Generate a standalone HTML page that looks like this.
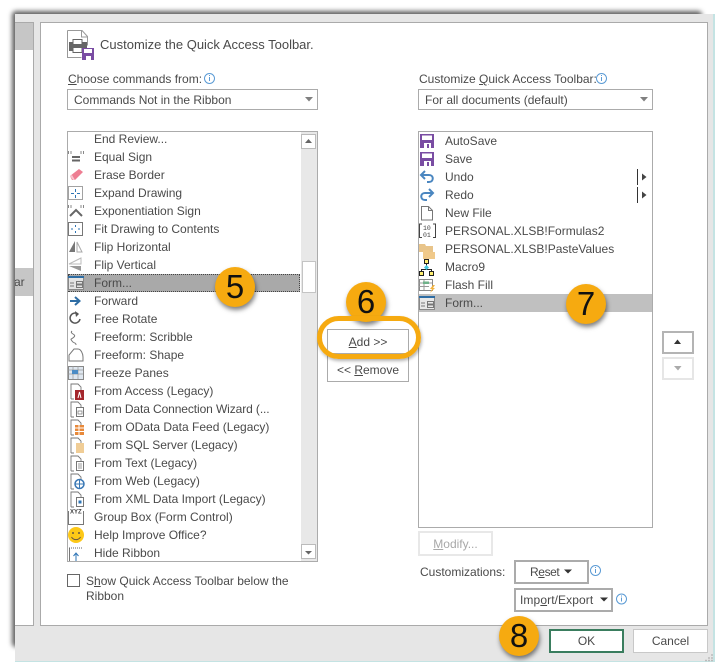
<!DOCTYPE html>
<html><head><meta charset="utf-8">
<style>
html,body{margin:0;padding:0;background:#fff}
#p{position:relative;width:715px;height:662px;overflow:hidden;background:#fff;font:12px "Liberation Sans",sans-serif;color:#4a4a4a}
#p div{position:absolute;box-sizing:border-box}
.t{white-space:nowrap;line-height:16px;height:16px}
.b{background:#fff;border:1px solid #ababab;text-align:center;color:#4a4a4a;white-space:nowrap}
.c{width:40px;height:40px;border-radius:50%;background:#f6aa10;color:#111;font-size:33px;line-height:40px;text-align:center;box-shadow:1px 3px 5px rgba(0,0,0,.5)}
u{text-underline-offset:1px}
</style></head><body><div id="p">
<div style="left:15px;top:14px;width:688px;height:634px;box-shadow:-2px -2px 5px 1px rgba(0,0,0,.62);background:#777;border-radius:3px"></div>
<div style="left:15px;top:14px;width:698px;height:647px;background:#e6e6e6"></div>
<div style="left:713px;top:14px;width:2px;height:648px;background:#c4e3e3"></div>
<div style="left:15px;top:661px;width:700px;height:1px;background:#c4e3e3"></div>
<div style="left:15px;top:22px;width:19px;height:604px;background:#fff;border-top:1px solid #aaa;border-right:1px solid #aaa;border-bottom:1px solid #aaa"></div>
<div style="left:15px;top:23px;width:18px;height:27px;background:#c6c6c6"></div>
<div style="left:15px;top:268px;width:18px;height:28px;background:#c6c6c6;text-align:left;text-indent:-1px;line-height:28px;overflow:hidden">ar</div>
<div style="left:40px;top:22px;width:668px;height:604px;background:#fff;border:1px solid #aaa"></div>

<div class="t" style="left:100px;top:37px;font-size:13px">Customize the Quick Access Toolbar.</div>
<div class="t" style="left:68px;top:71px"><u>C</u>hoose commands from:</div>
<div style="left:67px;top:89px;width:251px;height:21px;border:1px solid #ababab;background:#fff"></div>
<div class="t" style="left:74px;top:92px">Commands Not in the Ribbon</div>
<div class="t" style="left:419px;top:71px">Customize <u>Q</u>uick Access Toolbar:</div>
<div style="left:418px;top:89px;width:235px;height:21px;border:1px solid #ababab;background:#fff"></div>
<div class="t" style="left:425px;top:92px">For all documents (default)</div>

<div style="left:67px;top:131px;width:251px;height:431px;border:1px solid #ababab;background:#fff"></div>
<div style="left:301px;top:132px;width:16px;height:429px;background:#e8e8e8"></div>
<div style="left:301px;top:134px;width:15px;height:15px;background:#fff;border:1px solid #bbb"></div>
<div style="left:301px;top:544px;width:15px;height:15px;background:#fff;border:1px solid #bbb"></div>
<div style="left:302px;top:261px;width:14px;height:32px;background:#fff;border:1px solid #c4c4c4"></div>
<div style="left:68px;top:274px;width:232px;height:18px;background:#a9a9a9;border:1px dotted #444"></div>

<div class="t" style="left:94px;top:131px">End Review...</div>
<div class="t" style="left:94px;top:149px">Equal Sign</div>
<div class="t" style="left:94px;top:167px">Erase Border</div>
<div class="t" style="left:94px;top:185px">Expand Drawing</div>
<div class="t" style="left:94px;top:203px">Exponentiation Sign</div>
<div class="t" style="left:94px;top:221px">Fit Drawing to Contents</div>
<div class="t" style="left:94px;top:239px">Flip Horizontal</div>
<div class="t" style="left:94px;top:257px">Flip Vertical</div>
<div class="t" style="left:94px;top:275px">Form...</div>
<div class="t" style="left:94px;top:293px">Forward</div>
<div class="t" style="left:94px;top:311px">Free Rotate</div>
<div class="t" style="left:94px;top:329px">Freeform: Scribble</div>
<div class="t" style="left:94px;top:347px">Freeform: Shape</div>
<div class="t" style="left:94px;top:365px">Freeze Panes</div>
<div class="t" style="left:94px;top:383px">From Access (Legacy)</div>
<div class="t" style="left:94px;top:401px;letter-spacing:-.1px">From Data Connection Wizard (...</div>
<div class="t" style="left:94px;top:419px">From OData Data Feed (Legacy)</div>
<div class="t" style="left:94px;top:437px">From SQL Server (Legacy)</div>
<div class="t" style="left:94px;top:455px">From Text (Legacy)</div>
<div class="t" style="left:94px;top:473px">From Web (Legacy)</div>
<div class="t" style="left:94px;top:491px">From XML Data Import (Legacy)</div>
<div class="t" style="left:94px;top:509px">Group Box (Form Control)</div>
<div class="t" style="left:94px;top:527px">Help Improve Office?</div>
<div class="t" style="left:94px;top:545px">Hide Ribbon</div>

<div style="left:418px;top:131px;width:235px;height:397px;border:1px solid #ababab;background:#fff"></div>
<div style="left:419px;top:294px;width:233px;height:18px;background:#c0c0c0"></div>
<div class="t" style="left:445px;top:133px">AutoSave</div>
<div class="t" style="left:445px;top:151px">Save</div>
<div class="t" style="left:445px;top:169px">Undo</div>
<div class="t" style="left:445px;top:187px">Redo</div>
<div class="t" style="left:445px;top:205px">New File</div>
<div class="t" style="left:445px;top:223px">PERSONAL.XLSB!Formulas2</div>
<div class="t" style="left:445px;top:241px">PERSONAL.XLSB!PasteValues</div>
<div class="t" style="left:445px;top:259px">Macro9</div>
<div class="t" style="left:445px;top:277px">Flash Fill</div>
<div class="t" style="left:445px;top:295px">Form...</div>

<div class="b" style="left:327px;top:353px;width:82px;height:29px;line-height:33px">&lt;&lt; <u>R</u>emove</div>
<div class="b" style="left:327px;top:329px;width:82px;height:25px;line-height:24px"><u>A</u>dd &gt;&gt;</div>

<div class="b" style="left:662px;top:331px;width:32px;height:23px;border:2px solid #b4b4b4"></div>
<div class="b" style="left:662px;top:357px;width:32px;height:23px;border:2px solid #e6e6e6"></div>

<div class="b" style="left:418px;top:531px;width:75px;height:25px;line-height:22px;border:2px solid #e8e8e8;color:#a8a8a8"><u>M</u>odify...</div>
<div class="t" style="left:420px;top:564px">Customizations:</div>
<div class="b" style="left:514px;top:560px;width:75px;height:24px;border:2px solid #ababab;line-height:21px;text-align:left;padding-left:14px;letter-spacing:-.4px">R<u>e</u>set</div>
<div class="b" style="left:514px;top:588px;width:99px;height:24px;border:2px solid #ababab;line-height:21px;text-align:left;padding-left:4px;letter-spacing:.1px">Imp<u>o</u>rt/Export</div>
<div class="b" style="left:549px;top:629px;width:75px;height:24px;border:2px solid #3a7d5e;line-height:21px">OK</div>
<div class="b" style="left:633px;top:629px;width:75px;height:24px;line-height:22px;border-color:#c8c8c8">Cancel</div>

<div style="left:67px;top:574px;width:13px;height:13px;border:1px solid #666;background:#fff"></div>
<div class="t" style="left:86px;top:573px">S<u>h</u>ow Quick Access Toolbar below the</div>
<div class="t" style="left:86px;top:588px">Ribbon</div>

<svg width="715" height="662" style="position:absolute;left:0;top:0" fill="none">
<!-- title icon -->
<path d="M67.500 30.500h14.500l5.500 6v9M67.500 30.500v27h14" stroke="#999"/><path d="M81.500 31v6h6" stroke="#999"/>
<path d="M69 42h18v9h-18z" fill="#666"/><path d="M73 39.500h9v5h-9zM73 47.500h9v5h-9z" fill="#fff" stroke="#666"/>
<rect x="82" y="48" width="12" height="12" fill="#7a4da3"/><rect x="84" y="49" width="8" height="4" fill="#fff"/><rect x="86" y="56" width="5" height="4" fill="#fff"/>
<!-- info -->
<g stroke="#5b9bd5" fill="none"><circle cx="209.500" cy="78.500" r="5"/><circle cx="601.500" cy="78.500" r="5"/><circle cx="595.500" cy="570.500" r="5"/><circle cx="621.500" cy="599" r="5"/>
<path d="M209.500 77v4M209.500 75v1M601.500 77v4M601.500 75v1M595.500 569v4M595.500 567v1M621.500 597.500v4M621.500 595.500v1"/></g>
<!-- dropdown arrows -->
<path d="M305 97h8l-4 4.500zM640 97h8l-4 4.500z" fill="#808080"/>
<path d="M305 143l3.500-4 3.500 4zM305 551h7l-3.500 3.500z" fill="#666"/>
<path d="M674 344l3.500-4.500 3.500 4.500z" fill="#333"/><path d="M674 366h7.500l-3.500 4.500z" fill="#aaa"/>
<path d="M564 569.500h8l-4 4zM600 597.500h8l-4 4z" fill="#333"/>
<!-- right arrows -->
<path d="M637.500 169v16M637.500 187v16" stroke="#333"/><path d="M642 173.500l4.500 3.500-4.500 3.500zM642 191.500l4.500 3.500-4.500 3.500z" fill="#444"/>
<!-- left icons -->
<g>
<path d="M68.500 151v3M71 151v3M81 151v3M83.500 151v3" stroke="#888"/><path d="M72 157h8M72 160.500h8" stroke="#666" stroke-width="2"/>
<path d="M70 176l9-7 4 3-8 8h-3z" fill="#ee7d92"/><path d="M70 176l3 4h2l-3-5z" fill="#f8c5cf"/>
<rect x="68.500" y="186.500" width="14" height="13" stroke="#444" stroke-dasharray="1 1"/><path d="M75.500 189v3M75.500 195v3M71 193.500h3M77 193.500h3" stroke="#2e75b6"/>
<path d="M68.500 205v3M71 205v3M81 205v3M83.500 205v3" stroke="#888"/><path d="M70 216l6-6 6 6" stroke="#666" stroke-width="2"/>
<rect x="68.500" y="222.500" width="14" height="13" stroke="#777"/><path d="M75.500 225v2M75.500 231v2M71 229h2M78 229h2" stroke="#2e75b6"/>
<path d="M75 241l-6 11h6z" fill="#777"/><path d="M77 242v10h5z" stroke="#aaa"/>
<path d="M81 258l-12 6h12z" stroke="#bbb" fill="#fff"/><path d="M69 266h12v5z" fill="#999"/>
<rect x="68.500" y="276.500" width="15" height="13" fill="#e4e4e4" stroke="#888"/><rect x="68" y="276" width="16" height="2" fill="#2e6da4"/><path d="M70 283h4M70 286h4" stroke="#777"/><rect x="76.500" y="281.500" width="6" height="2.500" stroke="#777"/><rect x="76.500" y="285" width="6" height="2.500" stroke="#777"/>
<path d="M70 301h9" stroke="#2e6da4" stroke-width="2"/><path d="M75 297l4.500 4-4.500 4" stroke="#2e6da4" stroke-width="2"/>
<path d="M78 314a5 5 0 1 0 2 5" stroke="#555" stroke-width="1.500"/><path d="M75 311l4 3-3 3z" fill="#555"/>
<path d="M72 331c-3 3 5 3 2 6s-4 1-2 4 4 1 4 4" stroke="#777"/>
<path d="M69 361v-6l5-6h4c3 0 5 5 5 8v4z" stroke="#777"/>
<rect x="68.500" y="366.500" width="15" height="13" fill="#dfe7f0" stroke="#888"/><path d="M68 370h15M73 366v13M78 366v13M68 374h15" stroke="#999" stroke-width=".7"/><rect x="72" y="370" width="6" height="4" fill="#4a8bc5"/>
<g stroke="#777" stroke-width=".9"><path d="M71 399v-15h7l3 3v3M71 399h3M71 417v-15h7l3 3v3M71 417h3M71 435v-15h7l3 3v2M71 435h3M71 453v-15h7l3 3v2M71 453h3M71 471v-15h7l3 3v3M71 471h3M71 489v-15h7l3 3v3M71 489h3M71 507v-15h7l3 3v3M71 507h3"/></g>
<rect x="75" y="390" width="9" height="10" fill="#a4262c"/><path d="M78 398l1.500-6 1.500 6" stroke="#fff"/>
<rect x="76.500" y="407.500" width="7" height="9" fill="#fff" stroke="#777"/><path d="M78 411h4v3h-4z" stroke="#777" stroke-width=".7"/>
<rect x="75" y="425" width="9" height="10" fill="#e8893a"/><path d="M75 428h9M75 431.500h9M79 425v10" stroke="#fff"/>
<rect x="76" y="443" width="8" height="10" fill="#f0cd96"/>
<rect x="76.500" y="461.500" width="7" height="9" fill="#fff" stroke="#777"/><path d="M78 464h4M78 466h4M78 468h4" stroke="#777" stroke-width=".8"/>
<circle cx="79.500" cy="484" r="4.500" fill="#fff" stroke="#3a78b5" stroke-width="1.500"/><path d="M75 484h9M79.500 480v8" stroke="#3a78b5"/>
<rect x="76.500" y="497.500" width="7" height="9" fill="#fff" stroke="#777"/><rect x="78.500" y="500.500" width="3" height="3" fill="#2e75b6"/>
<path d="M68.500 511v13.500h15V511" stroke="#777"/>
<text x="70" y="513.500" font-size="6" font-weight="bold" font-family="Liberation Sans,sans-serif" fill="#444">XYZ</text>
<circle cx="76" cy="535" r="8" fill="#fdc817"/><circle cx="73" cy="533" r="1" fill="#654"/><circle cx="79" cy="533" r="1" fill="#654"/><path d="M71.500 537c2 3.500 7 3.500 9 0" stroke="#654"/>
<path d="M69.500 561v-13" stroke="#777"/><path d="M69 548h14" stroke="#666" stroke-dasharray="1 1"/><path d="M76 561v-7M73.500 556l2.500-3 2.500 3" stroke="#2e75b6"/>
</g>
<!-- right icons -->
<g>
<rect x="420" y="134" width="14" height="14" fill="#7a4da3"/><rect x="422" y="135.500" width="10" height="4.500" fill="#fff"/><rect x="424" y="143" width="7" height="5" fill="#fff"/><rect x="427" y="144" width="2" height="4" fill="#7a4da3"/>
<rect x="420" y="152" width="14" height="14" fill="#7a4da3"/><rect x="422" y="153.500" width="10" height="4.500" fill="#fff"/><rect x="424" y="161" width="7" height="5" fill="#fff"/><rect x="427" y="162" width="2" height="4" fill="#7a4da3"/>
<path d="M421 175h8c5 0 5 7 0 7h-2" stroke="#4a86c0" stroke-width="2"/><path d="M425 171l-4 4 4 4" stroke="#4a86c0" stroke-width="2"/>
<path d="M433 193h-8c-5 0-5 7 0 7h2" stroke="#4a86c0" stroke-width="2"/><path d="M429 189l4 4-4 4" stroke="#4a86c0" stroke-width="2"/>
<path d="M421.500 206.500h7l4 4v9.500h-11zM428.500 206.500v4h4" stroke="#777"/>
<path d="M422 224h-2.500v13.500h2.500M433 224h2.500v13.500h-2.500" stroke="#444"/>
<text x="423" y="230" font-size="6.500" font-family="Liberation Mono,monospace" fill="#444">10</text><text x="423" y="237" font-size="6.500" font-family="Liberation Mono,monospace" fill="#444">01</text>
<path d="M419 244h6l1 2h7v6h-14z" fill="#e8c48a"/><path d="M423 250h6l1 2h5v7h-12z" fill="#f0c98a"/>
<path d="M426.500 264v6M421.500 272v-2.500h10v2.500" stroke="#222"/><rect x="424.500" y="259.500" width="4" height="4" fill="#ffef70" stroke="#222"/><rect x="419.500" y="271.500" width="4" height="4" fill="#ffef70" stroke="#222"/><rect x="429.500" y="271.500" width="4" height="4" fill="#ffef70" stroke="#222"/><path d="M426.500 265l2.500 2.500-2.500 2.500-2.500-2.500z" fill="#43c6dd"/>
<rect x="419.500" y="279.500" width="13" height="11" stroke="#888"/><path d="M419 283h13M419 286.500h10M424 280v10" stroke="#999"/><rect x="423" y="281.500" width="6" height="2.500" fill="#6fb28a"/><path d="M433 285l-3 4h2l-2 4 5-5h-2l2-3z" fill="#f2b340"/>
<rect x="419.500" y="296.500" width="15" height="13" fill="#e8e8e8" stroke="#888"/><rect x="419" y="296" width="16" height="2" fill="#2e6da4"/><path d="M421 303h4M421 306h4" stroke="#777"/><rect x="427.500" y="301.500" width="6" height="2.500" stroke="#777"/><rect x="427.500" y="305" width="6" height="2.500" stroke="#777"/>
</g>
<!-- resize grip -->
<path d="M711 655h2M708 658h2M711 658h2M705 660.500h2M708 660.500h2M711 660.500h2" stroke="#bbb" stroke-width="1.500"/>
</svg>

<div class="c" style="left:215px;top:267px">5</div>
<div class="c" style="left:346px;top:282px">6</div>
<div style="left:317px;top:316px;width:104px;height:43px;border:5px solid #f6aa10;border-radius:22px;box-shadow:1px 2px 3px rgba(0,0,0,.3)"></div>
<div class="c" style="left:566px;top:284px">7</div>
<div class="c" style="left:499px;top:616px">8</div>
</div></body></html>
